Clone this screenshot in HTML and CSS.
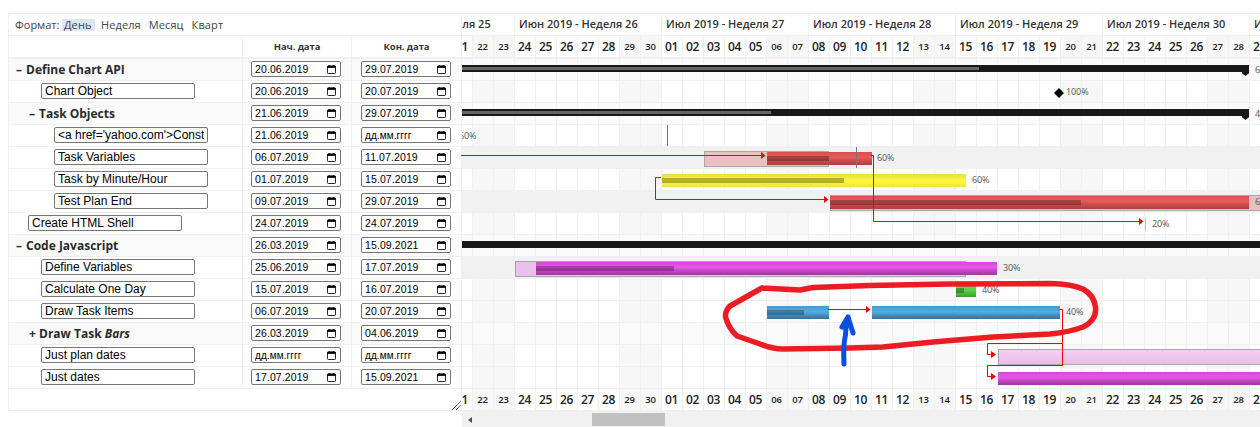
FILE: index.html
```html
<!DOCTYPE html>
<html lang="ru">
<head>
    <meta charset="utf-8">
    <title>Gantt</title>
    <link rel="stylesheet" href="styles.css">
</head>
<body>
    <svg class="defs" width="0" height="0">
        <symbol id="cal" viewBox="0 0 10 10">
            <path d="M2.5 0v1.5M7.5 0v1.5" stroke="#000" stroke-width="1" fill="none"/>
            <rect x="0.5" y="1" width="9" height="8.5" rx="1" fill="none" stroke="#000" stroke-width="1"/>
            <rect x="0.5" y="1" width="9" height="2.2" fill="#000"/>
        </symbol>
    </svg>

    <div class="gantt">
        <div class="list">
            <div class="format">
                <span class="format-label">Формат:</span>
                <span class="format-item active">День</span>
                <span class="format-item">Неделя</span>
                <span class="format-item">Месяц</span>
                <span class="format-item">Кварт</span>
            </div>
            <div class="list-head">
                <div class="col-name"></div>
                <div class="col-date">Нач. дата</div>
                <div class="col-date">Кон. дата</div>
            </div>

            <div class="list-row group">
                <div class="col-name lvl0"><span class="fold">–</span>Define Chart API</div>
                <div class="col-date"><label class="date"><input value="20.06.2019"><svg><use href="#cal"/></svg></label></div>
                <div class="col-date"><label class="date"><input value="29.07.2019"><svg><use href="#cal"/></svg></label></div>
            </div>
            <div class="list-row">
                <div class="col-name lvl1"><input class="name" value="Chart Object"></div>
                <div class="col-date"><label class="date"><input value="20.06.2019"><svg><use href="#cal"/></svg></label></div>
                <div class="col-date"><label class="date"><input value="20.07.2019"><svg><use href="#cal"/></svg></label></div>
            </div>
            <div class="list-row group">
                <div class="col-name lvl1-group"><span class="fold">–</span>Task Objects</div>
                <div class="col-date"><label class="date"><input value="21.06.2019"><svg><use href="#cal"/></svg></label></div>
                <div class="col-date"><label class="date"><input value="29.07.2019"><svg><use href="#cal"/></svg></label></div>
            </div>
            <div class="list-row">
                <div class="col-name lvl2"><input class="name" value="&lt;a href='yahoo.com'&gt;Constructor"></div>
                <div class="col-date"><label class="date"><input value="21.06.2019"><svg><use href="#cal"/></svg></label></div>
                <div class="col-date"><label class="date"><input class="empty" value="дд.мм.гггг"><svg><use href="#cal"/></svg></label></div>
            </div>
            <div class="list-row">
                <div class="col-name lvl2"><input class="name" value="Task Variables"></div>
                <div class="col-date"><label class="date"><input value="06.07.2019"><svg><use href="#cal"/></svg></label></div>
                <div class="col-date"><label class="date"><input value="11.07.2019"><svg><use href="#cal"/></svg></label></div>
            </div>
            <div class="list-row">
                <div class="col-name lvl2"><input class="name" value="Task by Minute/Hour"></div>
                <div class="col-date"><label class="date"><input value="01.07.2019"><svg><use href="#cal"/></svg></label></div>
                <div class="col-date"><label class="date"><input value="15.07.2019"><svg><use href="#cal"/></svg></label></div>
            </div>
            <div class="list-row">
                <div class="col-name lvl2"><input class="name" value="Test Plan End"></div>
                <div class="col-date"><label class="date"><input value="09.07.2019"><svg><use href="#cal"/></svg></label></div>
                <div class="col-date"><label class="date"><input value="29.07.2019"><svg><use href="#cal"/></svg></label></div>
            </div>
            <div class="list-row">
                <div class="col-name lvl0-input"><input class="name" value="Create HTML Shell"></div>
                <div class="col-date"><label class="date"><input value="24.07.2019"><svg><use href="#cal"/></svg></label></div>
                <div class="col-date"><label class="date"><input value="24.07.2019"><svg><use href="#cal"/></svg></label></div>
            </div>
            <div class="list-row group">
                <div class="col-name lvl0"><span class="fold">–</span>Code Javascript</div>
                <div class="col-date"><label class="date"><input value="26.03.2019"><svg><use href="#cal"/></svg></label></div>
                <div class="col-date"><label class="date"><input value="15.09.2021"><svg><use href="#cal"/></svg></label></div>
            </div>
            <div class="list-row">
                <div class="col-name lvl1"><input class="name" value="Define Variables"></div>
                <div class="col-date"><label class="date"><input value="25.06.2019"><svg><use href="#cal"/></svg></label></div>
                <div class="col-date"><label class="date"><input value="17.07.2019"><svg><use href="#cal"/></svg></label></div>
            </div>
            <div class="list-row">
                <div class="col-name lvl1"><input class="name" value="Calculate One Day"></div>
                <div class="col-date"><label class="date"><input value="15.07.2019"><svg><use href="#cal"/></svg></label></div>
                <div class="col-date"><label class="date"><input value="16.07.2019"><svg><use href="#cal"/></svg></label></div>
            </div>
            <div class="list-row">
                <div class="col-name lvl1"><input class="name" value="Draw Task Items"></div>
                <div class="col-date"><label class="date"><input value="06.07.2019"><svg><use href="#cal"/></svg></label></div>
                <div class="col-date"><label class="date"><input value="20.07.2019"><svg><use href="#cal"/></svg></label></div>
            </div>
            <div class="list-row group">
                <div class="col-name lvl1-group"><span class="fold">+</span>Draw Task&nbsp;<em>Bars</em></div>
                <div class="col-date"><label class="date"><input value="26.03.2019"><svg><use href="#cal"/></svg></label></div>
                <div class="col-date"><label class="date"><input value="04.06.2019"><svg><use href="#cal"/></svg></label></div>
            </div>
            <div class="list-row">
                <div class="col-name lvl1"><input class="name" value="Just plan dates"></div>
                <div class="col-date"><label class="date"><input class="empty" value="дд.мм.гггг"><svg><use href="#cal"/></svg></label></div>
                <div class="col-date"><label class="date"><input class="empty" value="дд.мм.гггг"><svg><use href="#cal"/></svg></label></div>
            </div>
            <div class="list-row">
                <div class="col-name lvl1"><input class="name" value="Just dates"></div>
                <div class="col-date"><label class="date"><input value="17.07.2019"><svg><use href="#cal"/></svg></label></div>
                <div class="col-date"><label class="date"><input value="15.09.2021"><svg><use href="#cal"/></svg></label></div>
            </div>
            <div class="list-foot">
                <svg class="resize" width="9" height="9" viewBox="0 0 9 9"><path d="M0 9L9 0M4 9L9 4" stroke="#777" fill="none"/></svg>
            </div>
        </div>

        <div class="chart">
            <div class="chart-inner">
                <div class="weeks">
                    <div class="week">Июн 2019 - Неделя 25</div>
                    <div class="week">Июн 2019 - Неделя 26</div>
                    <div class="week">Июл 2019 - Неделя 27</div>
                    <div class="week">Июл 2019 - Неделя 28</div>
                    <div class="week">Июл 2019 - Неделя 29</div>
                    <div class="week">Июл 2019 - Неделя 30</div>
                    <div class="week last">Июл 2019 - Неделя 31</div>
                </div>
                <div class="days head">
                    <span>21</span><span class="we">22</span><span class="we">23</span>
                    <span>24</span><span>25</span><span>26</span><span>27</span><span>28</span><span class="we">29</span><span class="we">30</span>
                    <span>01</span><span>02</span><span>03</span><span>04</span><span>05</span><span class="we">06</span><span class="we">07</span>
                    <span>08</span><span>09</span><span>10</span><span>11</span><span>12</span><span class="we">13</span><span class="we">14</span>
                    <span>15</span><span>16</span><span>17</span><span>18</span><span>19</span><span class="we">20</span><span class="we">21</span>
                    <span>22</span><span>23</span><span>24</span><span>25</span><span>26</span><span class="we">27</span><span class="we">28</span>
                    <span>29</span>
                </div>

                <div class="row group">
                    <div class="summary" style="left:0;width:882px"><i class="done" style="width:612px"></i></div>
                    <i class="tip" style="left:875px"></i>
                    <span class="pct" style="left:888px">67%</span>
                </div>
                <div class="row">
                    <i class="diamond" style="left:687px"></i>
                    <span class="pct" style="left:699px">100%</span>
                </div>
                <div class="row group">
                    <div class="summary" style="left:0;width:882px"><i class="done" style="width:404px"></i></div>
                    <i class="tip" style="left:875px"></i>
                    <span class="pct" style="left:888px">40%</span>
                </div>
                <div class="row">
                    <span class="pct" style="left:92px">60%</span>
                    <i class="today" style="left:300px"></i>
                </div>
                <div class="row grey">
                    <div class="plan red-plan" style="left:337px;width:125px"></div>
                    <div class="bar red" style="left:400px;width:105px"><i class="done" style="width:62px"></i></div>
                    <i class="today" style="left:489px"></i>
                    <span class="pct" style="left:510px">60%</span>
                </div>
                <div class="row">
                    <div class="bar yellow" style="left:295px;width:304px"><i class="done" style="width:182px"></i></div>
                    <span class="pct" style="left:605px">60%</span>
                </div>
                <div class="row grey">
                    <div class="plan red-plan" style="left:463px;width:460px"></div>
                    <div class="bar red" style="left:463px;width:419px"><i class="done" style="width:251px"></i></div>
                    <span class="pct" style="left:888px">60%</span>
                </div>
                <div class="row">
                    <i class="thin" style="left:778px"></i>
                    <span class="pct" style="left:785px">20%</span>
                </div>
                <div class="row group">
                    <div class="summary" style="left:0;width:903px"></div>
                </div>
                <div class="row grey">
                    <div class="plan pink-plan" style="left:148px;width:451px"></div>
                    <div class="bar purple" style="left:169px;width:461px"><i class="done" style="width:138px"></i></div>
                    <span class="pct" style="left:636px">30%</span>
                </div>
                <div class="row">
                    <div class="bar green" style="left:589px;width:20px"><i class="done" style="width:8px"></i></div>
                    <span class="pct" style="left:615px">40%</span>
                </div>
                <div class="row">
                    <div class="bar blue" style="left:400px;width:62px"><i class="done" style="width:37px"></i></div>
                    <div class="bar blue" style="left:505px;width:188px"></div>
                    <span class="pct" style="left:699px">40%</span>
                </div>
                <div class="row group"></div>
                <div class="row">
                    <div class="plan pink-plan light" style="left:631px;width:272px"></div>
                </div>
                <div class="row">
                    <div class="bar purple" style="left:631px;width:272px"></div>
                </div>

                <div class="days foot">
                    <span>21</span><span class="we">22</span><span class="we">23</span>
                    <span>24</span><span>25</span><span>26</span><span>27</span><span>28</span><span class="we">29</span><span class="we">30</span>
                    <span>01</span><span>02</span><span>03</span><span>04</span><span>05</span><span class="we">06</span><span class="we">07</span>
                    <span>08</span><span>09</span><span>10</span><span>11</span><span>12</span><span class="we">13</span><span class="we">14</span>
                    <span>15</span><span>16</span><span>17</span><span>18</span><span>19</span><span class="we">20</span><span class="we">21</span>
                    <span>22</span><span>23</span><span>24</span><span>25</span><span>26</span><span class="we">27</span><span class="we">28</span>
                    <span>29</span>
                </div>
            </div>
            <div class="scrollbar">
                <i class="scroll-arrow"></i>
                <div class="scroll-thumb"></div>
            </div>
        </div>
    </div>

    <!-- dependency lines and the hand drawn marks lie over the whole chart -->
    <svg class="overlay" width="1260" height="427" viewBox="0 0 1260 427">
        <g fill="none" stroke="#f00000" stroke-width="1">
            <path d="M461 155.5H762"/>
            <path d="M871 155.5H873.5V221.5H1140"/>
            <path d="M661 177.5H655.5V199.5H825"/>
            <path d="M828 309.5H867"/>
            <path d="M1059 309.5H1062.5V365.5H987.5V376.5H992"/>
            <path d="M1062.5 343.5H987.5V354.5H992"/>
        </g>
        <g fill="#f00000">
            <path d="M761 152l4.5 3.5l-4.5 3.5z"/>
            <path d="M1139 218l4.5 3.5l-4.5 3.5z"/>
            <path d="M824 196l4.5 3.5l-4.5 3.5z"/>
            <path d="M866 306l4.5 3.5l-4.5 3.5z"/>
            <path d="M991 351l5 3.5l-5 3.5z"/>
            <path d="M991 373l5 3.5l-5 3.5z"/>
        </g>
        <path d="M762 288L800 290L813 287.5L870 285.5L950 284L1050 283.5Q1072 284 1083 289Q1094 295 1095.5 307Q1097 320 1083 327Q1070 332 1050 334L993 337L933 342L883 347L850 348L783 349Q772 349 760 344L737 336Q729 329 725.5 317Q725 311 730 306L762 288" fill="none" stroke="#ed1c24" stroke-width="5.5" stroke-linejoin="round" stroke-linecap="round"/>
        <path d="M844 364Q843 345 845.5 335Q846 324 848 317M842 327L848 317L853 333" fill="none" stroke="#0a4fe0" stroke-width="5" stroke-linejoin="round" stroke-linecap="round"/>
    </svg>
</body>
</html>
```

FILE: styles.css
```css
* {
    box-sizing: border-box;
}
body {
    margin: 0;
    background-color: #fff;
    font-family: "Open Sans", sans-serif;
    color: #333;
    overflow: hidden;
}
.defs {
    position: absolute;
}
.gantt {
    display: flex;
    margin: 13px 0 0 8px;
    height: 414px;
}

/* left list */
.list {
    flex: 0 0 453px;
    height: 398px;
    border: 1px solid #f0f0f0;
}
.format {
    display: flex;
    align-items: center;
    height: 22px;
    padding-left: 6px;
    border-bottom: 1px solid #f0f0f0;
    font-size: 11px;
    color: #444;
}
.format-label {
    width: 47px;
}
.format-item {
    height: 12px;
    line-height: 12px;
    margin-right: 6px;
    padding: 0 1px;
    letter-spacing: 0.1px;
}
.format-item.active {
    width: 33px;
    margin-right: 5px;
    padding-left: 2px;
    background-color: #d8e8f6;
}
.list-head {
    display: flex;
    height: 23px;
    border-bottom: 2px solid #f0f0f0;
    font-size: 9.5px;
    font-weight: 700;
    letter-spacing: -0.1px;
    color: #333;
}
.list-row {
    display: flex;
    height: 22px;
    border-bottom: 1px solid #f0f0f0;
}
.list-row.group {
    background-color: #fafafa;
    font-size: 12px;
    font-weight: 700;
    color: #2b2b2b;
}
.col-name {
    display: flex;
    align-items: center;
    width: 234px;
    border-right: 1px solid #f0f0f0;
}
.list-row .col-name,
.list-row .col-date {
    align-items: flex-start;
    padding-top: 2px;
}
.list-row.group .col-name {
    line-height: 17px;
}
.col-date {
    display: flex;
    align-items: center;
    width: 109px;
    padding-left: 8px;
    border-right: 1px solid #f0f0f0;
}
.col-date:last-child {
    border-right: 0;
    padding-left: 9px;
}
.list-head .col-date,
.list-head .col-date:last-child {
    justify-content: center;
    padding-left: 0;
}
.lvl0 {
    padding-left: 7px;
}
.lvl0-input {
    padding-left: 19px;
}
.lvl1-group {
    padding-left: 20px;
}
.lvl1 {
    padding-left: 32px;
}
.lvl2 {
    padding-left: 45px;
}
.fold {
    width: 10px;
    font-weight: 700;
}
.name {
    width: 153.5px;
    height: 16px;
    padding: 0 3px;
    border: 1px solid #767676;
    border-radius: 2px;
    font-family: "Liberation Sans", sans-serif;
    font-size: 12px;
    color: #000;
    background-color: #fff;
}
.date {
    display: flex;
    align-items: center;
    width: 90px;
    height: 16px;
    padding: 0 4px 0 3px;
    border: 1px solid #767676;
    border-radius: 2px;
    background-color: #fff;
}
.date input {
    flex: 1;
    width: 60px;
    padding: 0;
    border: 0;
    background: none;
    font-family: "Liberation Sans", sans-serif;
    font-size: 10.5px;
    letter-spacing: 0.1px;
    color: #000;
}
.date input.empty {
    font-size: 10px;
}
.date svg {
    flex: none;
    width: 9px;
    height: 9px;
}
.list-foot {
    position: relative;
    height: 21px;
}
.resize {
    position: absolute;
    right: 0;
    bottom: 0;
}

/* right chart, scrolled so that 21 June sits on the list edge */
.chart {
    flex: 1;
    min-width: 0;
    overflow: hidden;
}
.chart-inner {
    width: 903px;
    margin-left: -95px;
}
.weeks {
    display: flex;
    height: 23px;
    border-top: 1px solid #f0f0f0;
    border-bottom: 1px solid #f0f0f0;
}
.week {
    flex: 0 0 147px;
    padding-left: 4px;
    border-left: 1px solid #f0f0f0;
    font-size: 11px;
    font-weight: 600;
    line-height: 20px;
    color: #333;
    white-space: nowrap;
}
.week.last {
    flex-basis: 21px;
    overflow: hidden;
}
.days {
    display: flex;
    padding-left: 84px;
    font-weight: 600;
    color: #222;
}
.days.head {
    height: 23px;
    border-bottom: 2px solid #f0f0f0;
}
.days.foot {
    height: 22px;
    border-bottom: 1px solid #f0f0f0;
}
.days span {
    flex: 0 0 21px;
    padding-right: 1px;
    border-left: 1px solid #f0f0f0;
    font-size: 12px;
    letter-spacing: -0.4px;
    line-height: 21px;
    text-align: center;
}
.days .we {
    background-color: #f7f7f7;
    font-size: 9.5px;
    letter-spacing: -0.2px;
}

/* rows: 21px day lines, two weekend columns in every 147px */
.row {
    position: relative;
    height: 22px;
    border-bottom: 1px solid #f0f0f0;
    background-image:
        repeating-linear-gradient(to right, #f0f0f0 0, #f0f0f0 1px, transparent 1px, transparent 21px),
        repeating-linear-gradient(to right, transparent 0, transparent 105px, #f7f7f7 105px, #f7f7f7 147px);
}
.row.group {
    background-color: #fafafa;
    background-image: repeating-linear-gradient(to right, #f0f0f0 0, #f0f0f0 1px, transparent 1px, transparent 21px);
}
.row.grey {
    background-color: #f1f1f1;
    background-image: none;
}
.summary {
    position: absolute;
    top: 6px;
    height: 7px;
    background-color: #181818;
}
.summary .done {
    position: absolute;
    top: 2px;
    left: 0;
    height: 3px;
    background-color: #666;
}
.tip {
    position: absolute;
    top: 10px;
    width: 7px;
    height: 7px;
    background-color: #181818;
    clip-path: polygon(0 40%, 100% 40%, 100% 60%, 50% 100%, 0 60%);
}
.diamond {
    position: absolute;
    top: 7px;
    width: 10px;
    height: 10px;
    background-color: #000;
    clip-path: polygon(50% 0, 100% 50%, 50% 100%, 0 50%);
}
.pct {
    position: absolute;
    top: 4px;
    font-size: 9px;
    letter-spacing: -0.1px;
    line-height: 14px;
    color: #555;
}
.today {
    position: absolute;
    top: 0;
    width: 1px;
    height: 21px;
    background-color: #777;
}
.thin {
    position: absolute;
    top: 5px;
    width: 1px;
    height: 13px;
    background-color: #f0d020;
}
.plan {
    position: absolute;
    top: 4px;
    height: 16px;
    border: 1px solid #a8a8a8;
}
.red-plan {
    background-color: #e9c1c1;
}
.pink-plan {
    background-color: #ecc0ec;
}
.pink-plan.light {
    background: linear-gradient(#f6cdf6, #e6bfe6);
}
.bar {
    position: absolute;
    top: 5px;
    height: 13px;
}
.bar .done {
    position: absolute;
    top: 4px;
    left: 0;
    height: 5px;
    background-color: rgba(0, 0, 0, 0.28);
}
.red {
    background: linear-gradient(#d84f4f, #e65c5c 40%, #c94a4a 70%, #a94040);
}
.yellow {
    background: linear-gradient(#e8de3e, #fdf83f 50%, #f0e53c);
}
.purple {
    background: linear-gradient(#d04bd0, #e858e8 40%, #c044c0 70%, #9a3a9a);
}
.green {
    background: linear-gradient(#68e050, #58d048 50%, #3e9a36);
}
.blue {
    background: linear-gradient(#4a98cc, #52aee4 45%, #4388b8 75%, #3a6e98);
}
.scrollbar {
    position: relative;
    height: 17px;
    background-color: #f1f1f1;
}
.scroll-arrow {
    position: absolute;
    left: 6px;
    top: 6px;
    border-style: solid;
    border-width: 3.5px 4px 3.5px 0;
    border-color: transparent #505050 transparent transparent;
}
.scroll-thumb {
    position: absolute;
    left: 130px;
    top: 2px;
    width: 73px;
    height: 13px;
    background-color: #c1c1c1;
}
.overlay {
    position: absolute;
    left: 0;
    top: 0;
    pointer-events: none;
}
```
